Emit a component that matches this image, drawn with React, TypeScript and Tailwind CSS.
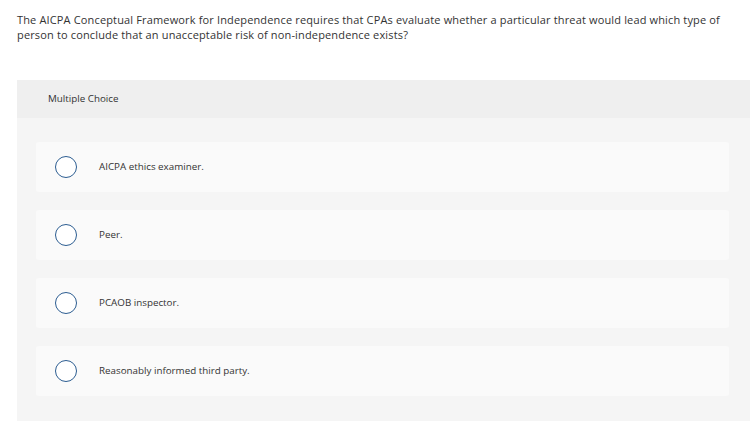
import React from "react";

const options = [
  "AICPA ethics examiner.",
  "Peer.",
  "PCAOB inspector.",
  "Reasonably informed third party.",
];

export default function App() {
  return (
    <div className="w-[755px] h-[421px] overflow-hidden bg-white" style={{ fontFamily: "'Open Sans', sans-serif" }}>
      <div className="pl-[17px] pr-[20px] pt-[12px] text-[11px] leading-[15px] tracking-[0.15px] text-[#333]">
        The AICPA Conceptual Framework for Independence requires that CPAs evaluate whether a particular threat would lead which type of person to conclude that an unacceptable risk of non-independence exists?
      </div>
      <div className="ml-[17px] mr-[5px] mt-[38px] bg-[#f5f5f5] rounded-t-[2px] h-[400px]">
        <div className="h-[38px] bg-[#efefef] flex items-center pl-[31px] text-[9.8px] text-[#333]">
          Multiple Choice
        </div>
        <div className="pt-[24px] pl-[19px] pr-[21px] flex flex-col gap-[18px]">
          {options.map((o) => (
            <div key={o} className="h-[50px] bg-[#fafafa] rounded-[3px] flex items-center pl-[19px]">
              <div className="w-[22px] h-[22px] rounded-full border-[1.5px] border-[#2c5d91] bg-white shrink-0" />
              <div className="ml-[22px] text-[9.8px] text-[#333]">{o}</div>
            </div>
          ))}
        </div>
      </div>
    </div>
  );
}
